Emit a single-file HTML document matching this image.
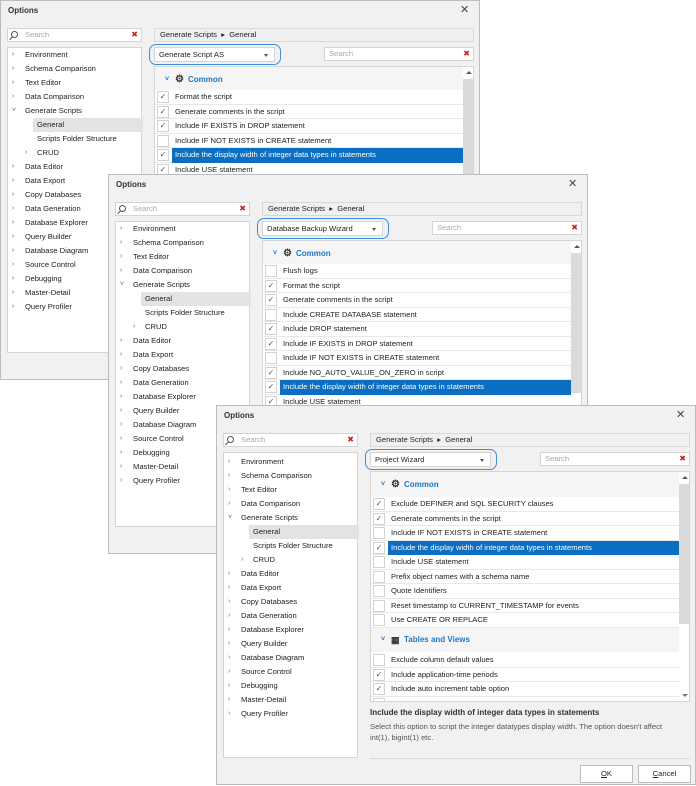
<!DOCTYPE html>
<html><head><meta charset="utf-8">
<style>
*{box-sizing:border-box;margin:0;padding:0}
body{width:696px;height:786px;overflow:hidden;background:#fff;position:relative;font-family:"Liberation Sans",sans-serif;font-size:7.6px;color:#222}
.dlg{position:absolute;width:480px;height:380px;background:#f1f1f1;border:1px solid #bdbdbd;overflow:hidden}
.ttl{position:absolute;left:7px;top:5px;font-weight:bold;font-size:8px;color:#333}
.cls{position:absolute;left:459px;top:2px;font-size:11px;color:#444}
.box{position:absolute;background:#fff;border:1px solid #d4d4d4}
.srch{height:14px;line-height:12px;color:#a8a8a8;padding-left:17px}
.srch .mg{position:absolute;left:3px;top:2px;width:7px;height:7px;border:1px solid #555;border-radius:50%}
.srch .mg:after{content:"";position:absolute;left:-3px;top:6px;width:4px;height:1px;background:#555;transform:rotate(-45deg)}
.srch .x{position:absolute;right:3px;top:0;color:#d02020;font-size:8px}
.tree{left:6px;top:46px;width:135px;height:306px}
.ti{position:absolute;height:14px;line-height:14px;white-space:nowrap}
.ch{position:absolute;font-size:7px;color:#666}
.sel{background:#e3e3e3}
.bc{left:153px;top:27px;width:320px;height:14px;line-height:12px;padding-left:5px;background:#f0f0f0;border-color:#d8d8d8}
.hl{position:absolute;left:148px;top:43px;width:132px;height:21px;border:1px solid #3d8fd9;border-radius:7px}
.cb{left:153px;top:46px;width:121px;height:15px;line-height:13px;padding-left:4px}
.cb:after{content:"";position:absolute;right:6px;top:6px;border:2.5px solid transparent;border-top:3px solid #555}
.grid{left:153px;top:65px;width:320px;height:231px;overflow:hidden;border-color:#d6d6d6}
.gh{position:absolute;left:0;width:308px;height:25px;background:#f5f5f5;color:#1d77c9;font-weight:bold;font-size:8px;line-height:25px}
.gh .cv{position:absolute;left:10px;font-size:7px}
.gh .ic{position:absolute;left:20px;color:#333;font-size:10px}
.gh span.t{position:absolute;left:33px}
.r{position:absolute;left:0;width:308px;height:14.5px;line-height:14.5px;border-bottom:1px solid #e8e8e8;white-space:nowrap;background:#fff}
.r .k{position:absolute;left:2px;top:1px;width:12px;height:12px;border:1px solid #d2d2d2;background:#fff;line-height:10px;text-align:center;font-size:8px;color:#555}
.r .tx{position:absolute;left:17px;right:0;padding-left:3px}
.r.s .tx{background:#0a6fc2;color:#fff}
.sb{position:absolute;left:308px;top:0;width:12px;height:231px;background:#fff}
.sb .tr{position:absolute;left:0;top:12px;width:12px;height:140px;background:#dadada}
.sb .up{position:absolute;left:3px;top:4px;border:3px solid transparent;border-bottom:3px solid #555;border-top:0}
.sb .dn{position:absolute;left:3px;bottom:6px;border:3px solid transparent;border-top:3px solid #777;border-bottom:0}
.dt{position:absolute;left:153px;top:302px;font-weight:bold;font-size:8px;color:#333}
.dd{position:absolute;left:153px;top:315px;width:300px;color:#555;line-height:11px}
.sep{position:absolute;left:153px;top:352px;width:320px;height:1px;background:#d8d8d8}
.btn{position:absolute;top:359px;height:18px;line-height:16px;text-align:center;background:#fff;border:1px solid #bcbcbc}
</style></head><body>

<!-- Dialog 1 -->
<div class="dlg" style="left:0;top:0">
<div class="ttl">Options</div><div class="cls">✕</div>
<div class="box srch" style="left:6px;top:27px;width:135px"><span class="mg"></span>Search<span class="x">✖</span></div>
<div class="box tree">
<div class="ti" style="top:0;left:4px"><span class="ch">›</span><span style="margin-left:13px">Environment</span></div>
<div class="ti" style="top:14px;left:4px"><span class="ch">›</span><span style="margin-left:13px">Schema Comparison</span></div>
<div class="ti" style="top:28px;left:4px"><span class="ch">›</span><span style="margin-left:13px">Text Editor</span></div>
<div class="ti" style="top:42px;left:4px"><span class="ch">›</span><span style="margin-left:13px">Data Comparison</span></div>
<div class="ti" style="top:56px;left:4px"><span class="ch">˅</span><span style="margin-left:13px">Generate Scripts</span></div>
<div class="ti sel" style="top:70px;left:25px;width:110px;padding-left:4px">General</div>
<div class="ti" style="top:84px;left:29px">Scripts Folder Structure</div>
<div class="ti" style="top:98px;left:17px"><span class="ch">›</span><span style="margin-left:12px">CRUD</span></div>
<div class="ti" style="top:112px;left:4px"><span class="ch">›</span><span style="margin-left:13px">Data Editor</span></div>
<div class="ti" style="top:126px;left:4px"><span class="ch">›</span><span style="margin-left:13px">Data Export</span></div>
<div class="ti" style="top:140px;left:4px"><span class="ch">›</span><span style="margin-left:13px">Copy Databases</span></div>
<div class="ti" style="top:154px;left:4px"><span class="ch">›</span><span style="margin-left:13px">Data Generation</span></div>
<div class="ti" style="top:168px;left:4px"><span class="ch">›</span><span style="margin-left:13px">Database Explorer</span></div>
<div class="ti" style="top:182px;left:4px"><span class="ch">›</span><span style="margin-left:13px">Query Builder</span></div>
<div class="ti" style="top:196px;left:4px"><span class="ch">›</span><span style="margin-left:13px">Database Diagram</span></div>
<div class="ti" style="top:210px;left:4px"><span class="ch">›</span><span style="margin-left:13px">Source Control</span></div>
<div class="ti" style="top:224px;left:4px"><span class="ch">›</span><span style="margin-left:13px">Debugging</span></div>
<div class="ti" style="top:238px;left:4px"><span class="ch">›</span><span style="margin-left:13px">Master-Detail</span></div>
<div class="ti" style="top:252px;left:4px"><span class="ch">›</span><span style="margin-left:13px">Query Profiler</span></div>
</div>
<div class="box bc">Generate Scripts &nbsp;▸&nbsp; General</div>
<div class="hl"></div>
<div class="box cb">Generate Script AS</div>
<div class="box srch" style="left:323px;top:46px;width:150px;padding-left:4px">Search<span class="x">✖</span></div>
<div class="box grid">
<div class="gh" style="top:0"><span class="cv">˅</span><span class="ic">⚙</span><span class="t">Common</span></div>
<div class="r" style="top:23px"><span class="k">✓</span><span class="tx">Format the script</span></div>
<div class="r" style="top:37.5px"><span class="k">✓</span><span class="tx">Generate comments in the script</span></div>
<div class="r" style="top:52px"><span class="k">✓</span><span class="tx">Include IF EXISTS in DROP statement</span></div>
<div class="r" style="top:66.5px"><span class="k"></span><span class="tx">Include IF NOT EXISTS in CREATE statement</span></div>
<div class="r s" style="top:81px"><span class="k">✓</span><span class="tx">Include the display width of integer data types in statements</span></div>
<div class="r" style="top:95.5px"><span class="k">✓</span><span class="tx">Include USE statement</span></div>
<div class="r" style="top:110px"><span class="k"></span><span class="tx">Prefix object names with a schema name</span></div>
<div class="sb"><span class="up"></span><span class="tr"></span><span class="dn"></span></div>
</div>
</div>

<!-- Dialog 2 -->
<div class="dlg" style="left:108px;top:174px">
<div class="ttl">Options</div><div class="cls">✕</div>
<div class="box srch" style="left:6px;top:27px;width:135px"><span class="mg"></span>Search<span class="x">✖</span></div>
<div class="box tree">
<div class="ti" style="top:0;left:4px"><span class="ch">›</span><span style="margin-left:13px">Environment</span></div>
<div class="ti" style="top:14px;left:4px"><span class="ch">›</span><span style="margin-left:13px">Schema Comparison</span></div>
<div class="ti" style="top:28px;left:4px"><span class="ch">›</span><span style="margin-left:13px">Text Editor</span></div>
<div class="ti" style="top:42px;left:4px"><span class="ch">›</span><span style="margin-left:13px">Data Comparison</span></div>
<div class="ti" style="top:56px;left:4px"><span class="ch">˅</span><span style="margin-left:13px">Generate Scripts</span></div>
<div class="ti sel" style="top:70px;left:25px;width:110px;padding-left:4px">General</div>
<div class="ti" style="top:84px;left:29px">Scripts Folder Structure</div>
<div class="ti" style="top:98px;left:17px"><span class="ch">›</span><span style="margin-left:12px">CRUD</span></div>
<div class="ti" style="top:112px;left:4px"><span class="ch">›</span><span style="margin-left:13px">Data Editor</span></div>
<div class="ti" style="top:126px;left:4px"><span class="ch">›</span><span style="margin-left:13px">Data Export</span></div>
<div class="ti" style="top:140px;left:4px"><span class="ch">›</span><span style="margin-left:13px">Copy Databases</span></div>
<div class="ti" style="top:154px;left:4px"><span class="ch">›</span><span style="margin-left:13px">Data Generation</span></div>
<div class="ti" style="top:168px;left:4px"><span class="ch">›</span><span style="margin-left:13px">Database Explorer</span></div>
<div class="ti" style="top:182px;left:4px"><span class="ch">›</span><span style="margin-left:13px">Query Builder</span></div>
<div class="ti" style="top:196px;left:4px"><span class="ch">›</span><span style="margin-left:13px">Database Diagram</span></div>
<div class="ti" style="top:210px;left:4px"><span class="ch">›</span><span style="margin-left:13px">Source Control</span></div>
<div class="ti" style="top:224px;left:4px"><span class="ch">›</span><span style="margin-left:13px">Debugging</span></div>
<div class="ti" style="top:238px;left:4px"><span class="ch">›</span><span style="margin-left:13px">Master-Detail</span></div>
<div class="ti" style="top:252px;left:4px"><span class="ch">›</span><span style="margin-left:13px">Query Profiler</span></div>
</div>
<div class="box bc">Generate Scripts &nbsp;▸&nbsp; General</div>
<div class="hl"></div>
<div class="box cb">Database Backup Wizard</div>
<div class="box srch" style="left:323px;top:46px;width:150px;padding-left:4px">Search<span class="x">✖</span></div>
<div class="box grid">
<div class="gh" style="top:0"><span class="cv">˅</span><span class="ic">⚙</span><span class="t">Common</span></div>
<div class="r" style="top:23px"><span class="k"></span><span class="tx">Flush logs</span></div>
<div class="r" style="top:37.5px"><span class="k">✓</span><span class="tx">Format the script</span></div>
<div class="r" style="top:52px"><span class="k">✓</span><span class="tx">Generate comments in the script</span></div>
<div class="r" style="top:66.5px"><span class="k"></span><span class="tx">Include CREATE DATABASE statement</span></div>
<div class="r" style="top:81px"><span class="k">✓</span><span class="tx">Include DROP statement</span></div>
<div class="r" style="top:95.5px"><span class="k">✓</span><span class="tx">Include IF EXISTS in DROP statement</span></div>
<div class="r" style="top:110px"><span class="k"></span><span class="tx">Include IF NOT EXISTS in CREATE statement</span></div>
<div class="r" style="top:124.5px"><span class="k">✓</span><span class="tx">Include NO_AUTO_VALUE_ON_ZERO in script</span></div>
<div class="r s" style="top:139px"><span class="k">✓</span><span class="tx">Include the display width of integer data types in statements</span></div>
<div class="r" style="top:153.5px"><span class="k">✓</span><span class="tx">Include USE statement</span></div>
<div class="r" style="top:168px"><span class="k"></span><span class="tx">Prefix object names with a schema name</span></div>
<div class="sb"><span class="up"></span><span class="tr"></span><span class="dn"></span></div>
</div>
</div>

<!-- Dialog 3 -->
<div class="dlg" style="left:216px;top:405px">
<div class="ttl">Options</div><div class="cls">✕</div>
<div class="box srch" style="left:6px;top:27px;width:135px"><span class="mg"></span>Search<span class="x">✖</span></div>
<div class="box tree">
<div class="ti" style="top:2px;left:4px"><span class="ch">›</span><span style="margin-left:13px">Environment</span></div>
<div class="ti" style="top:16px;left:4px"><span class="ch">›</span><span style="margin-left:13px">Schema Comparison</span></div>
<div class="ti" style="top:30px;left:4px"><span class="ch">›</span><span style="margin-left:13px">Text Editor</span></div>
<div class="ti" style="top:44px;left:4px"><span class="ch">›</span><span style="margin-left:13px">Data Comparison</span></div>
<div class="ti" style="top:58px;left:4px"><span class="ch">˅</span><span style="margin-left:13px">Generate Scripts</span></div>
<div class="ti sel" style="top:72px;left:25px;width:110px;padding-left:4px">General</div>
<div class="ti" style="top:86px;left:29px">Scripts Folder Structure</div>
<div class="ti" style="top:100px;left:17px"><span class="ch">›</span><span style="margin-left:12px">CRUD</span></div>
<div class="ti" style="top:114px;left:4px"><span class="ch">›</span><span style="margin-left:13px">Data Editor</span></div>
<div class="ti" style="top:128px;left:4px"><span class="ch">›</span><span style="margin-left:13px">Data Export</span></div>
<div class="ti" style="top:142px;left:4px"><span class="ch">›</span><span style="margin-left:13px">Copy Databases</span></div>
<div class="ti" style="top:156px;left:4px"><span class="ch">›</span><span style="margin-left:13px">Data Generation</span></div>
<div class="ti" style="top:170px;left:4px"><span class="ch">›</span><span style="margin-left:13px">Database Explorer</span></div>
<div class="ti" style="top:184px;left:4px"><span class="ch">›</span><span style="margin-left:13px">Query Builder</span></div>
<div class="ti" style="top:198px;left:4px"><span class="ch">›</span><span style="margin-left:13px">Database Diagram</span></div>
<div class="ti" style="top:212px;left:4px"><span class="ch">›</span><span style="margin-left:13px">Source Control</span></div>
<div class="ti" style="top:226px;left:4px"><span class="ch">›</span><span style="margin-left:13px">Debugging</span></div>
<div class="ti" style="top:240px;left:4px"><span class="ch">›</span><span style="margin-left:13px">Master-Detail</span></div>
<div class="ti" style="top:254px;left:4px"><span class="ch">›</span><span style="margin-left:13px">Query Profiler</span></div>
</div>
<div class="box bc">Generate Scripts &nbsp;▸&nbsp; General</div>
<div class="hl"></div>
<div class="box cb">Project Wizard</div>
<div class="box srch" style="left:323px;top:46px;width:150px;padding-left:4px">Search<span class="x">✖</span></div>
<div class="box grid">
<div class="gh" style="top:0"><span class="cv">˅</span><span class="ic">⚙</span><span class="t">Common</span></div>
<div class="r" style="top:25px"><span class="k">✓</span><span class="tx">Exclude DEFINER and SQL SECURITY clauses</span></div>
<div class="r" style="top:39.5px"><span class="k">✓</span><span class="tx">Generate comments in the script</span></div>
<div class="r" style="top:54px"><span class="k"></span><span class="tx">Include IF NOT EXISTS in CREATE statement</span></div>
<div class="r s" style="top:68.5px"><span class="k">✓</span><span class="tx">Include the display width of integer data types in statements</span></div>
<div class="r" style="top:83px"><span class="k"></span><span class="tx">Include USE statement</span></div>
<div class="r" style="top:97.5px"><span class="k"></span><span class="tx">Prefix object names with a schema name</span></div>
<div class="r" style="top:112px"><span class="k"></span><span class="tx">Quote Identifiers</span></div>
<div class="r" style="top:126.5px"><span class="k"></span><span class="tx">Reset timestamp to CURRENT_TIMESTAMP for events</span></div>
<div class="r" style="top:141px"><span class="k"></span><span class="tx">Use CREATE OR REPLACE</span></div>
<div class="gh" style="top:156px;height:24px;line-height:24px"><span class="cv">˅</span><span class="ic" style="font-size:9px">▦</span><span class="t">Tables and Views</span></div>
<div class="r" style="top:181px"><span class="k"></span><span class="tx">Exclude column default values</span></div>
<div class="r" style="top:195.5px"><span class="k">✓</span><span class="tx">Include application-time periods</span></div>
<div class="r" style="top:210px"><span class="k">✓</span><span class="tx">Include auto increment table option</span></div>
<div class="r" style="top:224.5px"><span class="k"></span><span class="tx"></span></div>
<div class="sb"><span class="up"></span><span class="tr"></span><span class="dn"></span></div>
</div>
<div class="dt">Include the display width of integer data types in statements</div>
<div class="dd">Select this option to script the integer datatypes display width. The option doesn't affect int(1), bigint(1) etc.</div>
<div class="sep"></div>
<div class="btn" style="left:363px;width:53px"><u>O</u>K</div>
<div class="btn" style="left:421px;width:53px"><u>C</u>ancel</div>
</div>
</body></html>
